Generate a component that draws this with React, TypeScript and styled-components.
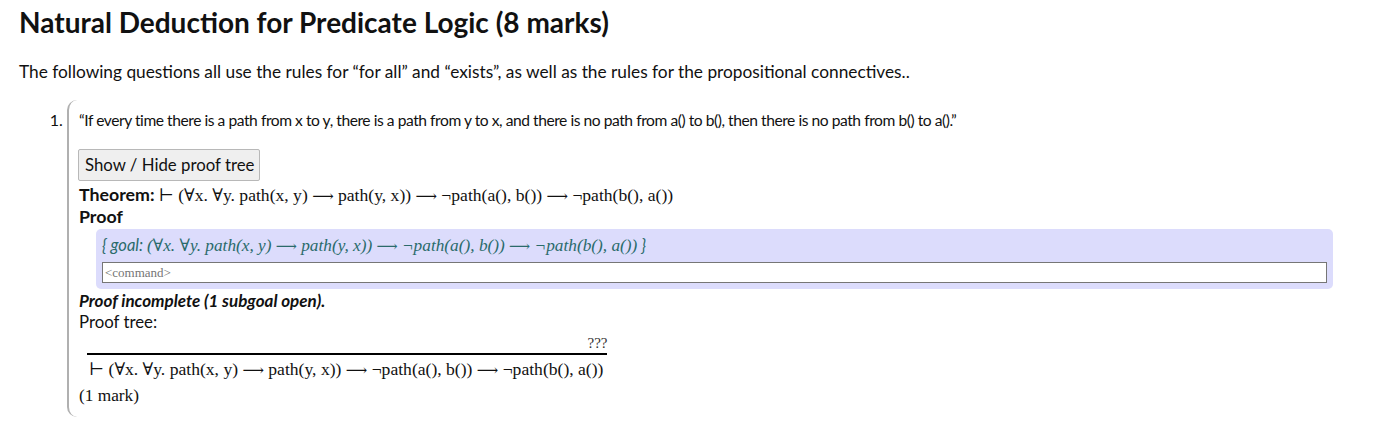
import React from "react";
import styled, { createGlobalStyle } from "styled-components";

const SANS = `"Lato", "Noto Sans", sans-serif`;
const SERIF = `"Liberation Serif", "DejaVu Serif", serif`;

const GlobalStyle = createGlobalStyle`
   html, body {
      margin: 0;
      padding: 0;
      background: #ffffff;
   }
   body {
      font-family: ${SANS};
      font-size: 16px;
      color: #111;
   }
`;

const Page = styled.div`
   padding: 6px 19px 0 19px;
`;

const Title = styled.h1`
   margin: 0;
   font-size: 28px;
   font-weight: 700;
   line-height: 32px;
`;

const Intro = styled.p`
   margin: 22px 0 16px 0;
   font-size: 17.3px;
   line-height: 24px;
`;

const QuestionList = styled.ol`
   margin: 0;
   padding-left: 48px;
`;

const QuestionItem = styled.li`
   border-left: 2px solid #b0b0b0;
   border-radius: 10px 0 0 10px;
   padding: 9px 0 10px 10px;
   line-height: 22px;
   font-size: 16px;
`;

const QuestionText = styled.div`
   margin-bottom: 18px;
   font-size: 15.6px;
   letter-spacing: -0.45px;
`;

const ToggleButton = styled.button`
   font-family: ${SANS};
   font-size: 16.8px;
   color: #111;
   background: #efefef;
   border: 1px solid #b8b8b8;
   border-radius: 2px;
   padding: 3px 5px 4px 6px;
   height: 32px;
   margin: 0 0 2px -1px;
   display: block;
`;

const Line = styled.div`
   height: 22px;
   line-height: 22px;
   white-space: nowrap;
`;

const Bold = styled.b`
   font-weight: 700;
   font-size: 17.8px;
`;

const Formula = styled.span<{ $italic?: boolean }>`
   font-family: ${SERIF};
   font-size: 17.6px;
   font-style: ${(p) => (p.$italic ? "italic" : "normal")};
`;

const Arrow = styled.span`
   font-family: "DejaVu Serif", serif;
   font-size: 0.85em;
   font-style: normal;
`;

const GoalBox = styled.div`
   margin: 2px 22px 0 17px;
   background: #dcdcfc;
   border-radius: 5px;
   padding: 3px 6px 6px 6px;
`;

const GoalText = styled.div`
   color: #2a6b6b;
   font-style: italic;
   height: 26px;
   line-height: 26px;
   margin-bottom: 4px;
   font-size: 16.5px;
   & > span {
      font-size: 17.3px;
   }
`;

const CommandInput = styled.input`
   display: block;
   box-sizing: border-box;
   width: 100%;
   height: 21px;
   font-family: ${SERIF};
   font-size: 13px;
   border: 1px solid #767676;
   padding: 1px 2px;
   &::placeholder {
      color: #757575;
   }
`;

const Status = styled.div`
   font-weight: 700;
   font-style: italic;
   font-size: 17px;
   height: 21px;
   line-height: 21px;
   margin-top: 1px;
`;

const TreeLabel = styled.div`
   font-size: 16.8px;
   height: 21px;
   line-height: 21px;
`;

const Tree = styled.div`
   display: flex;
   flex-direction: column;
   width: fit-content;
   margin: 1px 0 4px 8px;
`;

const Premise = styled.div`
   text-align: right;
   font-family: ${SERIF};
   font-size: 15px;
   color: #333;
   height: 20px;
   line-height: 20px;
   border-bottom: 2px solid #000;
`;

const Conclusion = styled.div`
   padding: 2px 4px 0 2px;
   height: 24px;
   line-height: 24px;
   white-space: nowrap;
`;

const Marks = styled.div`
   font-family: ${SERIF};
   font-size: 17.3px;
   height: 22px;
   line-height: 22px;
`;

const parts = ["⊢ (∀x. ∀y. path(x, y) ", " path(y, x)) ", " ¬path(a(), b()) ", " ¬path(b(), a())"];

const FormulaText: React.FC<{ goal?: boolean }> = ({ goal }) => {
   const segs = goal ? parts.map((s, i) => (i === 0 ? s.replace("⊢ ", "") : s)) : parts;
   return (
      <Formula $italic={goal}>
         {segs.map((s, i) => (
            <React.Fragment key={i}>
               {i > 0 && <Arrow>⟶</Arrow>}
               {s}
            </React.Fragment>
         ))}
      </Formula>
   );
};

export default function App() {
   return (
      <>
         <GlobalStyle />
         <Page>
            <Title>Natural Deduction for Predicate Logic (8 marks)</Title>
            <Intro>
               The following questions all use the rules for “for all” and “exists”, as well as the rules for the propositional connectives..
            </Intro>
            <QuestionList>
               <QuestionItem>
                  <QuestionText>
                     “If every time there is a path from x to y, there is a path from y to x, and there is no path from a() to b(), then there is no path from b() to a().”
                  </QuestionText>
                  <ToggleButton>Show / Hide proof tree</ToggleButton>
                  <Line>
                     <Bold>Theorem:</Bold> <FormulaText />
                  </Line>
                  <Line>
                     <Bold>Proof</Bold>
                  </Line>
                  <GoalBox>
                     <GoalText>
                        {"{ goal: "}
                        <FormulaText goal />
                        {" }"}
                     </GoalText>
                     <CommandInput placeholder="<command>" />
                  </GoalBox>
                  <Status>Proof incomplete (1 subgoal open).</Status>
                  <TreeLabel>Proof tree:</TreeLabel>
                  <Tree>
                     <Premise>???</Premise>
                     <Conclusion>
                        <FormulaText />
                     </Conclusion>
                  </Tree>
                  <Marks>(1 mark)</Marks>
               </QuestionItem>
            </QuestionList>
         </Page>
      </>
   );
}
